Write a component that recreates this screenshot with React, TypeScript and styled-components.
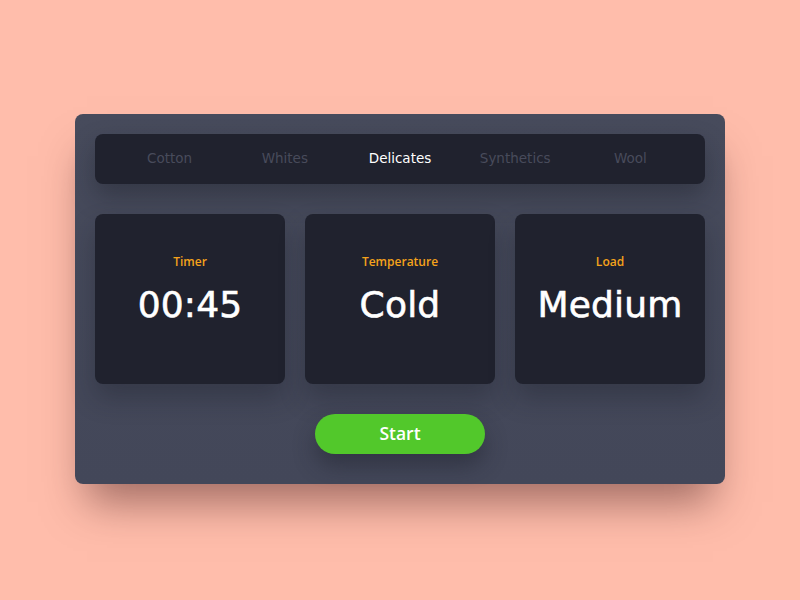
import React, { useState } from "react";
import styled, { createGlobalStyle } from "styled-components";

const GlobalStyle = createGlobalStyle`
  html, body {
    margin: 0;
    padding: 0;
    background: #ffbdab;
  }
  body {
    font-family: "DejaVu Sans", "Open Sans", sans-serif;
    -webkit-font-smoothing: antialiased;
  }
`;

const Page = styled.div`
  width: 800px;
  height: 600px;
  box-sizing: border-box;
  padding-top: 114px;
  display: flex;
  justify-content: center;
  align-items: flex-start;
  background: #ffbdab;
`;

const Panel = styled.div`
  width: 650px;
  height: 370px;
  box-sizing: border-box;
  padding: 20px;
  border-radius: 8px;
  background: linear-gradient(180deg, #474b5c 0%, #434759 100%);
  box-shadow: 0 30px 40px -12px rgba(70, 30, 30, 0.5);
  display: flex;
  flex-direction: column;
  align-items: center;
`;

const TabBar = styled.div`
  align-self: stretch;
  height: 50px;
  box-sizing: border-box;
  padding: 0 17px 2px;
  border-radius: 8px;
  background: #20222e;
  box-shadow: 0 12px 24px rgba(20, 22, 32, 0.35);
  display: flex;
  align-items: center;
`;

const Tab = styled.button<{ $active: boolean }>`
  flex: 1;
  border: 0;
  background: none;
  padding: 0;
  cursor: pointer;
  font-family: "DejaVu Sans", "Open Sans", sans-serif;
  font-size: 13.5px;
  line-height: 18px;
  font-weight: 400;
  color: ${(p) => (p.$active ? "#ffffff" : "#484b5b")};
`;

const Cards = styled.div`
  align-self: stretch;
  margin-top: 30px;
  display: grid;
  grid-template-columns: repeat(3, 1fr);
  gap: 20px;
`;

const Card = styled.div`
  height: 170px;
  box-sizing: border-box;
  padding-top: 40px;
  border-radius: 8px;
  background: #20222e;
  box-shadow: 0 14px 26px rgba(20, 22, 32, 0.3);
  display: flex;
  flex-direction: column;
  align-items: center;
`;

const Label = styled.div`
  font-family: "Open Sans", "Noto Sans", sans-serif;
  font-size: 12px;
  font-weight: 600;
  color: #f5a21b;
  line-height: 16px;
`;

const Value = styled.div`
  margin-top: 13px;
  font-family: "DejaVu Sans", "Open Sans", sans-serif;
  font-size: 36px;
  font-weight: 400;
  color: #ffffff;
  -webkit-text-stroke: 0.6px #ffffff;
  line-height: 44px;
  letter-spacing: 0.2px;
`;

const StartButton = styled.button`
  margin-top: 30px;
  width: 170px;
  height: 40px;
  padding: 0 0 3px;
  border: 0;
  border-radius: 20px;
  background: #52c82b;
  color: #ffffff;
  font-family: "Open Sans", "Noto Sans", sans-serif;
  font-size: 17.5px;
  line-height: 24px;
  font-weight: 600;
  cursor: pointer;
  box-shadow: 0 12px 22px rgba(28, 30, 42, 0.45);
`;

const programs = ["Cotton", "Whites", "Delicates", "Synthetics", "Wool"];

const settings = [
  { label: "Timer", value: "00:45" },
  { label: "Temperature", value: "Cold" },
  { label: "Load", value: "Medium" },
];

export default function App() {
  const [active, setActive] = useState("Delicates");
  return (
    <Page>
      <GlobalStyle />
      <Panel>
        <TabBar>
          {programs.map((p) => (
            <Tab key={p} $active={p === active} onClick={() => setActive(p)}>
              {p}
            </Tab>
          ))}
        </TabBar>
        <Cards>
          {settings.map((s) => (
            <Card key={s.label}>
              <Label>{s.label}</Label>
              <Value>{s.value}</Value>
            </Card>
          ))}
        </Cards>
        <StartButton>Start</StartButton>
      </Panel>
    </Page>
  );
}
